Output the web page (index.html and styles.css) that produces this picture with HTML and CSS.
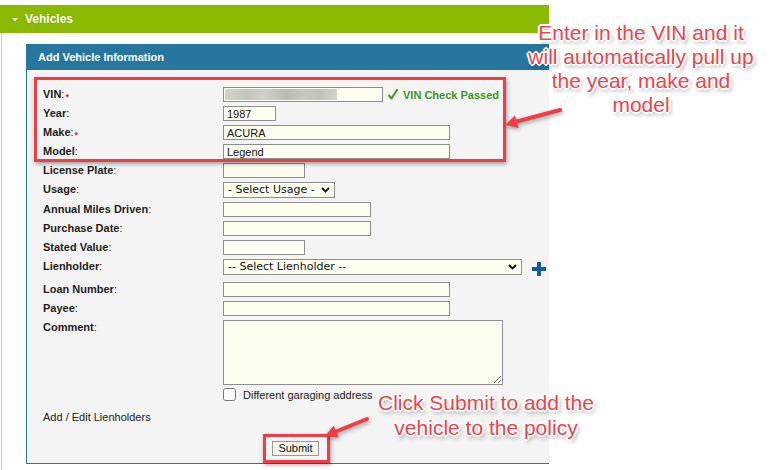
FILE: index.html
```html
<!DOCTYPE html>
<html>
<head>
<meta charset="utf-8">
<link rel="stylesheet" href="styles.css">
</head>
<body>
<div class="canvas">
  <div class="shot">
    <div class="section-bar"><span class="tri"></span><span class="section-title">Vehicles</span></div>
    <div class="section-body">
      <div class="panel">
        <div class="panel-head">Add Vehicle Information</div>
        <div class="panel-body">
          <div class="form">
            <div class="lbl"><b>VIN</b>:<span class="req">*</span></div>
            <div class="fld">
              <div class="inp w160 vin"><span class="blur"></span></div>
              <svg class="check" width="10" height="11" viewBox="0 0 10 11"><path d="M1 6.5 L3.5 9.5 L9 1" fill="none" stroke="#3d9a1c" stroke-width="2" stroke-linecap="round" stroke-linejoin="round"/></svg>
              <span class="passed">VIN Check Passed</span>
            </div>

            <div class="lbl"><b>Year</b>:</div>
            <div class="fld"><input class="inp w53" value="1987"></div>

            <div class="lbl"><b>Make</b>:<span class="req">*</span></div>
            <div class="fld"><input class="inp w227" value="ACURA"></div>

            <div class="lbl"><b>Model</b>:</div>
            <div class="fld"><input class="inp w227" value="Legend"></div>

            <div class="lbl"><b>License Plate</b>:</div>
            <div class="fld"><input class="inp w82"></div>

            <div class="lbl"><b>Usage</b>:</div>
            <div class="fld">
              <div class="sel w112"><select><option>- Select Usage -</option></select><svg class="chev" width="9" height="6" viewBox="0 0 9 6"><path d="M1 1 L4.5 4.5 L8 1" fill="none" stroke="#111" stroke-width="1.8"/></svg></div>
            </div>

            <div class="lbl"><b>Annual Miles Driven</b>:</div>
            <div class="fld"><input class="inp w148"></div>

            <div class="lbl"><b>Purchase Date</b>:</div>
            <div class="fld"><input class="inp w148"></div>

            <div class="lbl"><b>Stated Value</b>:</div>
            <div class="fld"><input class="inp w82"></div>

            <div class="lbl"><b>Lienholder</b>:</div>
            <div class="fld lien">
              <div class="sel w299"><select><option>-- Select Lienholder --</option></select><svg class="chev" width="9" height="6" viewBox="0 0 9 6"><path d="M1 1 L4.5 4.5 L8 1" fill="none" stroke="#111" stroke-width="1.8"/></svg></div>
              <svg class="plus" width="14" height="14" viewBox="0 0 14 14"><path d="M5 0 H9 V5 H14 V9 H9 V14 H5 V9 H0 V5 H5 Z" fill="#1558a8"/></svg>
            </div>

            <div class="lbl"><b>Loan Number</b>:</div>
            <div class="fld"><input class="inp w227"></div>

            <div class="lbl"><b>Payee</b>:</div>
            <div class="fld"><input class="inp w227"></div>

            <div class="lbl"><b>Comment</b>:</div>
            <div class="fld"><textarea class="ta"></textarea></div>

            <div class="lbl"></div>
            <div class="fld chk-row"><input type="checkbox" class="chk"><span>Different garaging address</span></div>
          </div>
          <div class="edit-link">Add / Edit Lienholders</div>
          <div class="submit-row"><button class="submit">Submit</button></div>
        </div>
      </div>
    </div>
  </div>

  <div class="redbox box1"></div>
  <div class="redbox box2"></div>
  <svg class="arrows" width="777" height="470" viewBox="0 0 777 470">
    <path d="M560 110 L515 122" stroke="#ef3d47" stroke-width="4" stroke-linecap="round"/>
    <polygon points="505,125 518.5,128 515,115.5" fill="#ef3d47"/>
    <path d="M367 419 L335 432" stroke="#ef3d47" stroke-width="4" stroke-linecap="round"/>
    <polygon points="325,436 338.6,437.5 333.7,425.6" fill="#ef3d47"/>
  </svg>
  <div class="note note1">Enter in the VIN and it<br>will automatically pull up<br>the year, make and<br>model</div>
  <div class="note note2">Click Submit to add the<br>vehicle to the policy</div>
</div>
</body>
</html>
```

FILE: styles.css
```css
html, body {
  margin: 0;
  padding: 0;
  background: #fff;
}
body {
  font-family: "Liberation Sans", Arial, sans-serif;
  color: #222;
}
.canvas {
  position: relative;
  width: 777px;
  height: 470px;
  overflow: hidden;
}
.shot {
  width: 549px;
  height: 470px;
  overflow: hidden;
  padding-top: 5px;
  box-sizing: border-box;
}
.section-bar {
  height: 28px;
  background: #89ba00;
  display: flex;
  align-items: center;
  padding-left: 12px;
  width: 600px;
}
.tri {
  width: 0;
  height: 0;
  border-left: 3px solid transparent;
  border-right: 3px solid transparent;
  border-top: 3px solid #fff;
  margin-right: 7px;
  margin-top: 1px;
}
.section-title {
  color: #fff;
  font-weight: bold;
  font-size: 12px;
  text-shadow: 0 0 1px rgba(0,0,0,.2);
}
.section-body {
  margin-left: 1px;
  border-left: 1px solid #b3cde2;
  padding: 11px 0 0 24px;
  height: 440px;
}
.panel {
  width: 539px;
  border: 1px solid #2776a0;
  box-sizing: border-box;
  background: #f4f4f4;
}
.panel-head {
  height: 25px;
  background: #2776a0;
  color: #fff;
  font-weight: bold;
  font-size: 11px;
  display: flex;
  align-items: center;
  padding-left: 11px;
  padding-bottom: 1px;
  box-sizing: border-box;
}
.panel-body {
  padding: 17px 0 7px 16px;
}
.form {
  display: grid;
  grid-template-columns: 180px 1fr;
  row-gap: 4px;
  align-items: start;
}
.lbl {
  font-size: 11px;
  line-height: 14px;
  height: 14px;
  color: #1e1e1e;
  white-space: nowrap;
}
.lbl b {
  font-weight: bold;
}
.req {
  color: #e0202a;
  font-size: 9px;
  line-height: 0;
  font-weight: bold;
  position: relative;
  top: 2px;
  margin-left: 1px;
}
.fld {
  display: flex;
  align-items: center;
  height: 15px;
}
.inp {
  height: 15px;
  box-sizing: border-box;
  border: 1px solid #8e8e8e;
  background: #fefef0;
  font-family: "Liberation Sans", Arial, sans-serif;
  font-size: 11px;
  color: #111;
  padding: 0 3px;
  margin: 0;
  outline: none;
}
.w53 { width: 53px; }
.w82 { width: 82px; }
.w112 { width: 112px; }
.w148 { width: 148px; }
.w160 { width: 160px; }
.w227 { width: 227px; }
.w299 { width: 299px; }
.vin {
  display: flex;
  align-items: center;
  padding: 0 1px;
}
.blur {
  display: block;
  width: 112px;
  height: 11px;
  background: linear-gradient(90deg, #d2d4ca 0%, #c4c6bc 20%, #cfd0c7 35%, #b9bbb3 55%, #c7c9c0 70%, #bfc3b8 85%, #d0d4c8 100%);
  filter: blur(0.7px);
}
.check {
  margin-left: 5px;
}
.passed {
  margin-left: 5px;
  color: #3a981c;
  font-weight: bold;
  font-size: 11px;
}
.sel {
  position: relative;
  height: 16px;
}
.sel select {
  -webkit-appearance: none;
  appearance: none;
  width: 100%;
  height: 16px;
  box-sizing: border-box;
  border: 1px solid #8e8e8e;
  background: #fefef0;
  font-family: "DejaVu Sans", Verdana, sans-serif;
  font-size: 11px;
  color: #111;
  padding: 0 0 0 4px;
  margin: 0;
  line-height: 14px;
  outline: none;
  display: block;
}
.chev {
  position: absolute;
  right: 5px;
  top: 5px;
}
.fld:has(.sel) {
  height: 16px;
  align-items: flex-start;
}
.lien {
  margin-bottom: 3px;
}
.plus {
  margin-left: 10px;
  margin-top: 3px;
}
.fld:has(.ta) {
  height: 65px;
}
.ta {
  width: 280px;
  height: 65px;
  box-sizing: border-box;
  border: 1px solid #8e8e8e;
  background: #fefef0;
  margin: 0;
  padding: 2px;
  outline: none;
  display: block;
}
.chk-row {
  margin-top: -1px;
  height: 13px;
  font-size: 11px;
  color: #222;
}
.chk {
  width: 13px;
  height: 13px;
  margin: 0 7px 0 0;
}
.edit-link {
  margin-top: 7px;
  font-size: 11px;
  line-height: 15px;
  color: #222;
}
.submit-row {
  display: flex;
  justify-content: center;
  margin-top: 16px;
  padding-right: 16px;
}
.submit {
  width: 47px;
  height: 15px;
  box-sizing: border-box;
  border: 1px solid #9a9a9a;
  background: #f7f7ee;
  font-family: "Liberation Sans", Arial, sans-serif;
  font-size: 11px;
  color: #111;
  padding: 0;
  line-height: 13px;
}
.redbox {
  position: absolute;
  border: 3px solid #ef3d47;
  box-sizing: border-box;
  box-shadow: 1px 2px 4px rgba(0,0,0,.35);
}
.box1 {
  left: 34px;
  top: 77px;
  width: 472px;
  height: 85px;
}
.box2 {
  left: 263px;
  top: 434px;
  width: 67px;
  height: 29px;
}
.arrows {
  position: absolute;
  left: 0;
  top: 0;
  filter: drop-shadow(1px 2px 2px rgba(0,0,0,.35));
}
.note {
  position: absolute;
  width: 260px;
  text-align: center;
  font-family: "Liberation Sans", Arial, sans-serif;
  font-size: 21px;
  color: #f0424b;
  text-shadow:
    1px 1px 0 #fff, -1px -1px 0 #fff, 1px -1px 0 #fff, -1px 1px 0 #fff,
    2px 0 0 #fff, -2px 0 0 #fff, 0 2px 0 #fff, 0 -2px 0 #fff,
    2px 3px 4px rgba(0,0,0,.45);
}
.note1 {
  left: 511px;
  top: 21px;
  line-height: 24px;
}
.note2 {
  left: 356px;
  top: 390px;
  line-height: 25px;
}
```
